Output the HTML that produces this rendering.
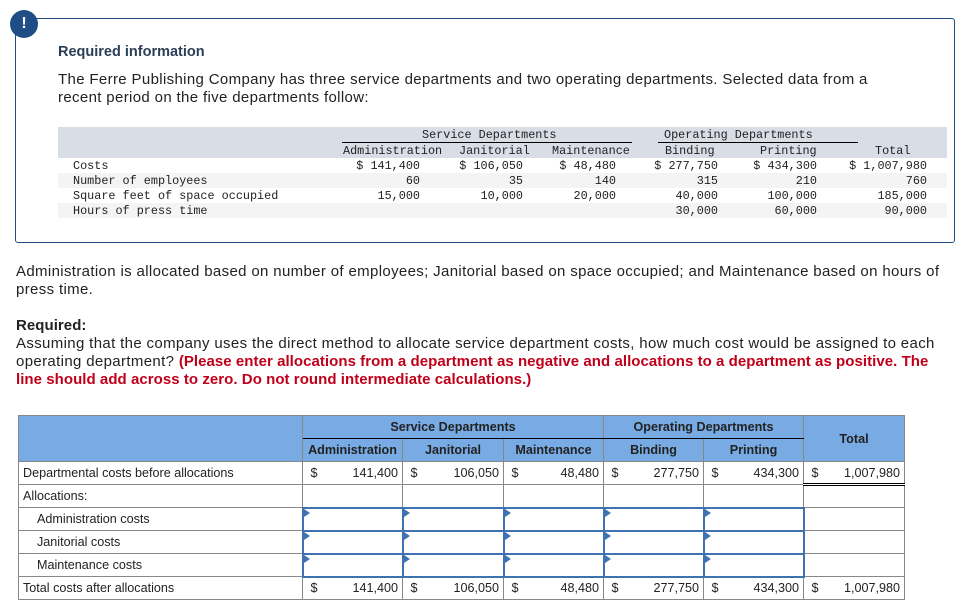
<!DOCTYPE html>
<html><head><meta charset="utf-8"><style>
*{margin:0;padding:0;box-sizing:border-box}
body{width:960px;height:597px;background:#fff;font-family:"Liberation Sans",sans-serif;color:#222;position:relative;overflow:hidden}
.abs{position:absolute;white-space:nowrap}
.box{position:absolute;left:15px;top:18px;width:940px;height:225px;border:1px solid #1f4e86;border-radius:3px}
.icon{position:absolute;left:10px;top:10px;width:28px;height:28px;border-radius:50%;background:#1f4e86;color:#fff;font-weight:bold;font-size:16px;text-align:center;line-height:28px}
.t{font-size:15px;line-height:18px;color:#222;letter-spacing:0.35px}
.t b{letter-spacing:0.05px}
.mono{font-family:"Liberation Mono",monospace;font-size:11.8px;color:#222}
.dt{position:absolute;left:58px;width:889px}
.r{position:absolute;text-align:right}
table.b{position:absolute;left:18px;top:415px;border-collapse:collapse;font-size:12.6px;color:#222}
table.b td{border:1px solid #888;height:23px;padding:0 4px;white-space:nowrap}
.hd{background:#78aae3;font-weight:bold;text-align:center}
.inp{border:2px solid #3e72b0 !important;position:relative}
.inp:before{content:"";position:absolute;left:0;top:0;border-left:6px solid #3e72b0;border-top:4px solid transparent;border-bottom:4px solid transparent}
.num{display:flex;justify-content:space-between}
</style></head><body>
<div class="box"></div>
<div class="icon">!</div>
<div class="abs" style="left:58px;top:44px;font-size:14.5px;font-weight:bold;color:#2b3e57">Required information</div>
<div class="abs t" style="left:58px;top:71px">The Ferre Publishing Company has three service departments and two operating departments. Selected data from a<br>recent period on the five departments follow:</div>

<div class="dt" style="top:127px;height:31px;background:#d9dde6"></div>
<div class="dt" style="top:173px;height:15px;background:#f4f4f4"></div>
<div class="dt" style="top:203px;height:15px;background:#f4f4f4"></div>
<div class="abs" style="left:342px;top:142px;width:290px;border-top:1px solid #000"></div>
<div class="abs" style="left:658px;top:142px;width:200px;border-top:1px solid #000"></div>
<div class="mono">
<div class="abs" style="left:422px;top:128px">Service Departments</div>
<div class="abs" style="left:664px;top:128px">Operating Departments</div>
<div class="abs" style="left:343px;top:144px">Administration</div>
<div class="abs" style="left:459px;top:144px">Janitorial</div>
<div class="abs" style="left:552px;top:144px">Maintenance</div>
<div class="abs" style="left:665px;top:144px">Binding</div>
<div class="abs" style="left:760px;top:144px">Printing</div>
<div class="abs" style="left:875px;top:144px">Total</div>
<div class="abs" style="left:73px;top:159px;line-height:15px">Costs<br>Number of employees<br>Square feet of space occupied<br>Hours of press time</div>
<div class="r" style="right:540px;top:159px;line-height:15px">$ 141,400<br>60<br>15,000</div>
<div class="r" style="right:437px;top:159px;line-height:15px">$ 106,050<br>35<br>10,000</div>
<div class="r" style="right:344px;top:159px;line-height:15px">$ 48,480<br>140<br>20,000</div>
<div class="r" style="right:242px;top:159px;line-height:15px">$ 277,750<br>315<br>40,000<br>30,000</div>
<div class="r" style="right:143px;top:159px;line-height:15px">$ 434,300<br>210<br>100,000<br>60,000</div>
<div class="r" style="right:33px;top:159px;line-height:15px">$ 1,007,980<br>760<br>185,000<br>90,000</div>
</div>

<div class="abs t" style="left:16px;top:263px">Administration is allocated based on number of employees; Janitorial based on space occupied; and Maintenance based on hours of<br>press time.</div>
<div class="abs t" style="left:16px;top:317px"><b>Required:</b><br>Assuming that the company uses the direct method to allocate service department costs, how much cost would be assigned to each<br>operating department? <b style="color:#c0001a">(Please enter allocations from a department as negative and allocations to a department as positive. The<br>line should add across to zero. Do not round intermediate calculations.)</b></div>

<table class="b">
<colgroup><col style="width:284px"><col style="width:100px"><col style="width:101px"><col style="width:100px"><col style="width:100px"><col style="width:100px"><col style="width:101px"></colgroup>
<tr><td class="hd" rowspan="2"></td><td class="hd" colspan="3" style="border-bottom:1px solid #000">Service Departments</td><td class="hd" colspan="2" style="border-bottom:1px solid #000">Operating Departments</td><td class="hd" rowspan="2">Total</td></tr>
<tr><td class="hd">Administration</td><td class="hd">Janitorial</td><td class="hd">Maintenance</td><td class="hd">Binding</td><td class="hd">Printing</td></tr>
<tr><td>Departmental costs before allocations</td><td><div class="num"><span>&nbsp;$</span><span>141,400</span></div></td><td><div class="num"><span>&nbsp;$</span><span>106,050</span></div></td><td><div class="num"><span>&nbsp;$</span><span>48,480</span></div></td><td><div class="num"><span>&nbsp;$</span><span>277,750</span></div></td><td><div class="num"><span>&nbsp;$</span><span>434,300</span></div></td><td style="border-bottom:3px double #000"><div class="num"><span>&nbsp;$</span><span>1,007,980</span></div></td></tr>
<tr><td>Allocations:</td><td></td><td></td><td></td><td></td><td></td><td></td></tr>
<tr><td style="padding-left:18px">Administration costs</td><td class="inp"></td><td class="inp"></td><td class="inp"></td><td class="inp"></td><td class="inp"></td><td></td></tr>
<tr><td style="padding-left:18px">Janitorial costs</td><td class="inp"></td><td class="inp"></td><td class="inp"></td><td class="inp"></td><td class="inp"></td><td></td></tr>
<tr><td style="padding-left:18px">Maintenance costs</td><td class="inp"></td><td class="inp"></td><td class="inp"></td><td class="inp"></td><td class="inp"></td><td></td></tr>
<tr><td style="border-top:1px solid #000">Total costs after allocations</td><td style="border-top:1px solid #000"><div class="num"><span>&nbsp;$</span><span>141,400</span></div></td><td style="border-top:1px solid #000"><div class="num"><span>&nbsp;$</span><span>106,050</span></div></td><td style="border-top:1px solid #000"><div class="num"><span>&nbsp;$</span><span>48,480</span></div></td><td style="border-top:1px solid #000"><div class="num"><span>&nbsp;$</span><span>277,750</span></div></td><td style="border-top:1px solid #000"><div class="num"><span>&nbsp;$</span><span>434,300</span></div></td><td style="border-top:1px solid #000"><div class="num"><span>&nbsp;$</span><span>1,007,980</span></div></td></tr>
</table>
</body></html>
